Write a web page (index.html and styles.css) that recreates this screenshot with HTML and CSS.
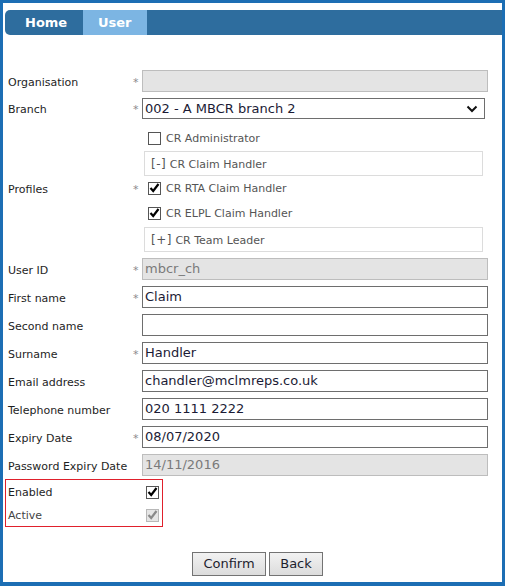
FILE: index.html
```html
<!DOCTYPE html>
<html>
<head>
<meta charset="utf-8">
<link rel="stylesheet" href="styles.css">
</head>
<body>
<div class="frame">
  <div class="tabbar">
    <div class="tab tab-home">Home</div>
    <div class="tab tab-user">User</div>
  </div>

  <div class="form">
    <div class="lbl">Organisation</div><div class="star">*</div>
    <div class="field disabled"></div>

    <div class="lbl">Branch</div><div class="star">*</div>
    <div class="field select"><span>002 - A MBCR branch 2</span>
      <svg class="chev" width="12" height="8" viewBox="0 0 12 8"><path d="M1.5 1.5 L6 6 L10.5 1.5" fill="none" stroke="#111" stroke-width="2"/></svg>
    </div>

    <div class="lbl lbl-mid">Profiles</div><div class="star lbl-mid">*</div>
    <div class="profiles">
      <div class="prow"><span class="cb"></span><span class="ptext">CR Administrator</span></div>
      <div class="pgroup"><span class="ptext"><b class="br">[-]</b> CR Claim Handler</span></div>
      <div class="prow"><span class="cb"><svg width="13" height="13" viewBox="0 0 13 13"><path d="M2.5 6 L5.2 9 L10.5 2" fill="none" stroke="#000" stroke-width="2.2"/></svg></span><span class="ptext">CR RTA Claim Handler</span></div>
      <div class="prow"><span class="cb"><svg width="13" height="13" viewBox="0 0 13 13"><path d="M2.5 6 L5.2 9 L10.5 2" fill="none" stroke="#000" stroke-width="2.2"/></svg></span><span class="ptext">CR ELPL Claim Handler</span></div>
      <div class="pgroup pgroup2"><span class="ptext"><b class="br">[+]</b> CR Team Leader</span></div>
    </div>

    <div class="lbl">User ID</div><div class="star">*</div>
    <div class="field disabled">mbcr_ch</div>

    <div class="lbl">First name</div><div class="star">*</div>
    <div class="field">Claim</div>

    <div class="lbl">Second name</div><div class="star"></div>
    <div class="field"></div>

    <div class="lbl">Surname</div><div class="star">*</div>
    <div class="field">Handler</div>

    <div class="lbl">Email address</div><div class="star"></div>
    <div class="field">chandler@mclmreps.co.uk</div>

    <div class="lbl">Telephone number</div><div class="star"></div>
    <div class="field">020 1111 2222</div>

    <div class="lbl">Expiry Date</div><div class="star">*</div>
    <div class="field">08/07/2020</div>

    <div class="lbl">Password Expiry Date</div><div class="star"></div>
    <div class="field disabled">14/11/2016</div>
  </div>

  <div class="flags">
    <div class="frow frow1"><span class="flbl">Enabled</span><span class="cb"><svg width="13" height="13" viewBox="0 0 13 13"><path d="M2.5 6 L5.2 9 L10.5 2" fill="none" stroke="#000" stroke-width="2.2"/></svg></span></div>
    <div class="frow frow2"><span class="flbl flbl-dis">Active</span><span class="cb cb-dis"><svg width="13" height="13" viewBox="0 0 13 13"><path d="M2.5 6 L5.2 9 L10.5 2" fill="none" stroke="#8a8a8a" stroke-width="2.2"/></svg></span></div>
  </div>

  <div class="buttons">
    <div class="btn btn-confirm">Confirm</div>
    <div class="btn btn-back">Back</div>
  </div>
</div>
</body>
</html>
```

FILE: styles.css
```css
html, body {
  margin: 0;
  padding: 0;
  background: #ffffff;
}
.frame {
  box-sizing: border-box;
  width: 505px;
  height: 586px;
  border: 3px solid #1c6eb4;
  border-bottom-width: 4px;
  font-family: "DejaVu Sans", Verdana, sans-serif;
  background: #ffffff;
}
.tabbar {
  margin: 7px 0 0 2px;
  height: 25px;
  background: #2e6d9e;
  border-radius: 5px 0 0 5px;
  display: flex;
  overflow: hidden;
}
.tab {
  color: #ffffff;
  font-weight: bold;
  font-size: 13px;
  line-height: 25px;
  box-sizing: border-box;
}
.tab-home {
  width: 78px;
  padding-left: 20px;
}
.tab-user {
  width: 64px;
  padding-left: 15px;
  background: #7cb5e3;
}
.form {
  margin-top: 35px;
  padding-left: 5px;
  display: grid;
  grid-template-columns: 125px 9px 346px;
  row-gap: 6px;
  align-items: center;
}
.lbl {
  font-size: 11px;
  color: #1e1e1e;
  padding-top: 2px;
}
.lbl-mid {
  align-self: center;
}
.star {
  font-size: 11px;
  color: #8a8a8a;
  padding-top: 2px;
}
.field {
  box-sizing: border-box;
  height: 22px;
  border: 1px solid #6e6e6e;
  background: #ffffff;
  font-size: 13px;
  color: #1b1b35;
  line-height: 20px;
  padding-left: 2px;
  white-space: nowrap;
}
.field.disabled {
  background: #e4e4e4;
  border-color: #bdbdbd;
  color: #7a7a7a;
}
.field.select {
  height: 21px;
  width: 343px;
  line-height: 19px;
  display: flex;
  justify-content: space-between;
  align-items: center;
  padding-right: 6px;
}
.chev {
  display: block;
}
.profiles {
  display: flex;
  flex-direction: column;
  padding-top: 1px;
  padding-left: 2px;
}
.prow {
  height: 25px;
  display: flex;
  align-items: center;
  padding-left: 4px;
}
.cb {
  box-sizing: border-box;
  width: 13px;
  height: 13px;
  border: 1px solid #555555;
  background: #ffffff;
  display: flex;
  align-items: center;
  justify-content: center;
  flex: none;
}
.cb svg {
  display: block;
  flex: none;
}
.ptext {
  font-size: 11px;
  color: #555555;
  margin-left: 5px;
}
.br {
  font-weight: normal;
  font-size: 12px;
  letter-spacing: 0.5px;
}
.pgroup {
  box-sizing: border-box;
  height: 25px;
  width: 339px;
  border: 1px solid #dcdcdc;
  display: flex;
  align-items: center;
  padding-left: 1px;
}
.pgroup2 {
  margin-top: 1px;
}
.flags {
  box-sizing: border-box;
  margin: 3px 0 0 2px;
  width: 158px;
  border: 1px solid #e0202c;
  padding-left: 2px;
}
.frow {
  display: flex;
  align-items: center;
}
.frow1 {
  height: 24px;
}
.frow2 {
  height: 22px;
}
.flbl {
  width: 138px;
  font-size: 11px;
  color: #1e1e1e;
}
.flbl-dis {
  color: #444444;
}
.cb-dis {
  border-color: #b8b8b8;
  background: #e6e6e6;
}
.buttons {
  margin-top: 25px;
  padding-left: 189px;
  display: flex;
  gap: 3px;
}
.btn {
  box-sizing: border-box;
  height: 24px;
  border: 1px solid #737373;
  background: linear-gradient(#f2f2f2, #dcdcdc);
  font-size: 13px;
  color: #1e1e2e;
  line-height: 22px;
  text-align: center;
}
.btn-confirm {
  width: 74px;
}
.btn-back {
  width: 54px;
}
```
